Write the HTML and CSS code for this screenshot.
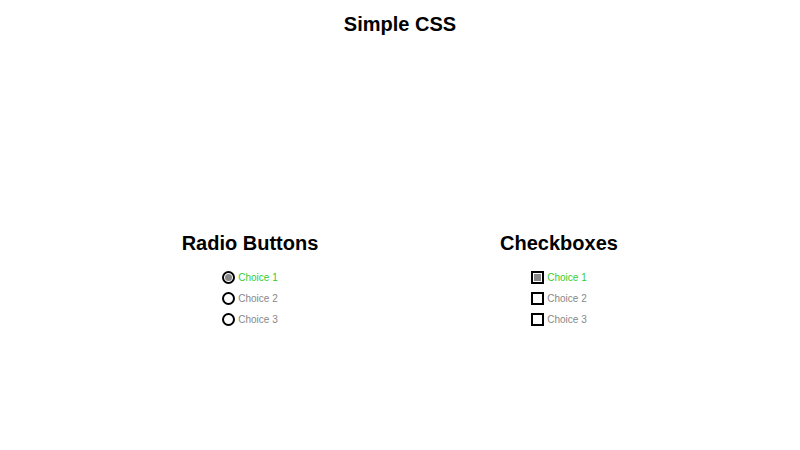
FILE: index.html
```html
<!DOCTYPE html>
<html>
<head>
<meta charset="utf-8">
<link rel="stylesheet" href="styles.css">
</head>
<body>
<h1 class="title">Simple CSS</h1>
<div class="columns">
  <section class="col">
    <h2 class="col-title">Radio Buttons</h2>
    <ul class="choices">
      <li class="choice checked"><span class="mark radio"></span><span class="label">Choice 1</span></li>
      <li class="choice"><span class="mark radio"></span><span class="label">Choice 2</span></li>
      <li class="choice"><span class="mark radio"></span><span class="label">Choice 3</span></li>
    </ul>
  </section>
  <section class="col">
    <h2 class="col-title">Checkboxes</h2>
    <ul class="choices">
      <li class="choice checked"><span class="mark box"></span><span class="label">Choice 1</span></li>
      <li class="choice"><span class="mark box"></span><span class="label">Choice 2</span></li>
      <li class="choice"><span class="mark box"></span><span class="label">Choice 3</span></li>
    </ul>
  </section>
</div>
</body>
</html>
```
FILE: styles.css
```css
html, body {
  margin: 0;
  padding: 0;
  background: #fff;
  font-family: "Liberation Sans", Arial, sans-serif;
  color: #000;
}
.title {
  margin: 11px 0 0;
  text-align: center;
  font-size: 20px;
  line-height: 26px;
  font-weight: bold;
}
.columns {
  display: flex;
  justify-content: center;
  gap: 109px;
  padding-left: 9px;
  margin-top: 193px;
}
.col {
  width: 200px;
  display: flex;
  flex-direction: column;
  align-items: center;
}
.col-title {
  margin: 0;
  font-size: 20px;
  line-height: 26px;
  font-weight: bold;
}
.choices {
  list-style: none;
  margin: 15px 0 0;
  padding: 0;
  display: flex;
  flex-direction: column;
  gap: 8px;
}
.choice {
  display: flex;
  align-items: center;
  gap: 3px;
  height: 13px;
  font-size: 10px;
  color: #888;
}
.choice.checked .label {
  color: #3c3;
}
.mark {
  box-sizing: border-box;
  width: 13px;
  height: 13px;
  border: 2px solid #000;
  background: #fff;
  position: relative;
  flex: none;
}
.radio {
  border-radius: 50%;
}
.checked .mark::after {
  content: "";
  position: absolute;
  left: 1px;
  top: 1px;
  width: 7px;
  height: 7px;
  background: #888;
}
.checked .radio::after {
  border-radius: 50%;
}
```
